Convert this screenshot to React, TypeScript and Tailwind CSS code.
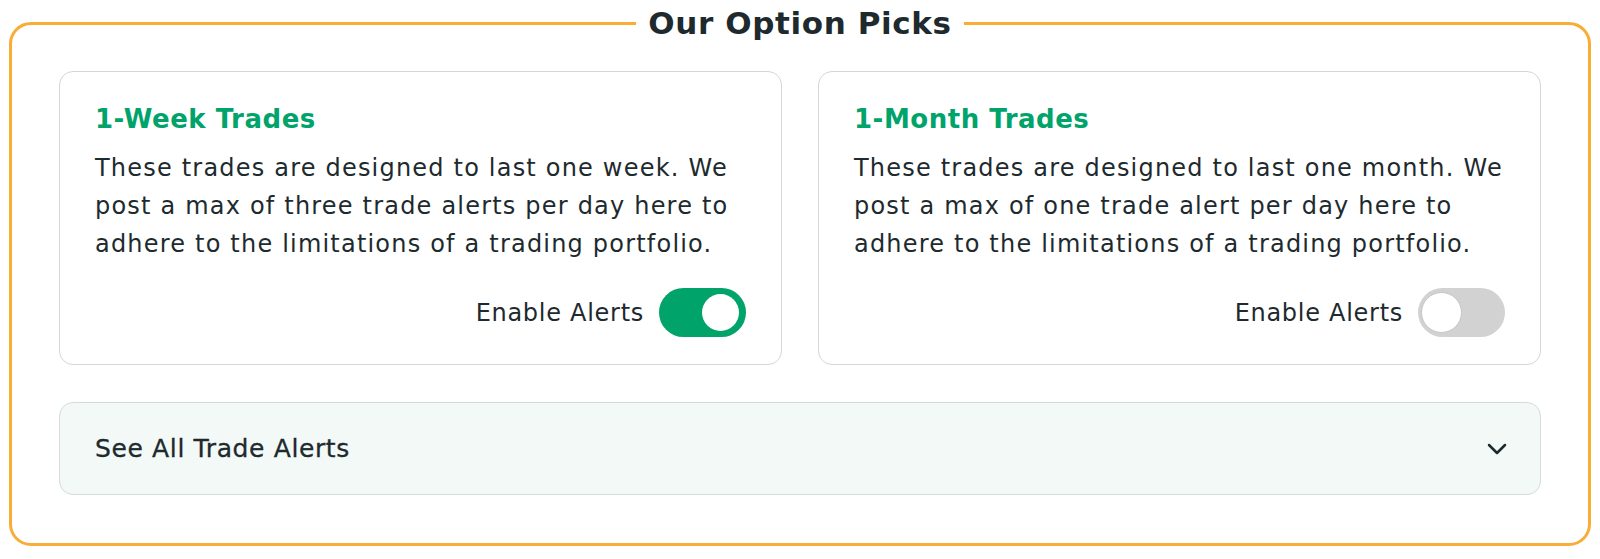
import React from "react";

function Toggle({ on }: { on: boolean }) {
  return on ? (
    <div className="w-[87px] h-[49px] rounded-full bg-[#00a36a] flex items-center justify-end px-[7px] shrink-0">
      <div className="w-[37px] h-[37px] rounded-full bg-white" />
    </div>
  ) : (
    <div className="w-[87px] h-[49px] rounded-full bg-[#d2d2d2] flex items-center justify-start px-[3px] shrink-0">
      <div className="w-[41px] h-[41px] rounded-full bg-white border-[1.5px] border-[#c4c4c4]" />
    </div>
  );
}

function Card({ title, text, on }: { title: string; text: string; on: boolean }) {
  return (
    <div className="flex-1 h-[294px] shrink-0 rounded-[14px] border border-[#d6d6d6] bg-white flex flex-col pl-[35px] pr-[35px] pt-[27px] pb-[27px]">
      <h3 className="text-[26px] leading-[40px] font-bold text-[#00a36a] tracking-[0.02em]">{title}</h3>
      <p className="mt-[10px] text-[24px] leading-[38px] text-[#1d2a2e] tracking-[0.05em]">{text}</p>
      <div className="mt-auto flex items-center justify-end gap-[15px]">
        <span className="text-[24px] text-[#1d2a2e] tracking-[0.03em]">Enable Alerts</span>
        <Toggle on={on} />
      </div>
    </div>
  );
}

export default function App() {
  return (
    <div className="w-[1600px] h-[559px] bg-white" style={{ fontFamily: "'DejaVu Sans', sans-serif" }}>
      <fieldset className="mx-[9px] border-[3px] border-[#f9ad36] rounded-[22px] px-[47px] pb-[48px]">
        <legend className="mx-auto px-[12px] text-[31px] leading-[46px] font-bold text-[#1e2a2e] tracking-[0.02em]">
          Our Option Picks
        </legend>
        <div className="pt-[25px] flex flex-col gap-[37px]">
          <div className="flex gap-[36px] shrink-0">
            <Card
              title="1-Week Trades"
              text="These trades are designed to last one week. We post a max of three trade alerts per day here to adhere to the limitations of a trading portfolio."
              on={true}
            />
            <Card
              title="1-Month Trades"
              text="These trades are designed to last one month. We post a max of one trade alert per day here to adhere to the limitations of a trading portfolio."
              on={false}
            />
          </div>
          <div className="h-[93px] shrink-0 rounded-[14px] border border-[#d4dbd9] bg-[#f3f9f7] flex items-center justify-between pl-[35px] pr-[33px]">
            <span className="text-[25px] text-[#1d2a2e] tracking-[0.025em] [-webkit-text-stroke:0.3px_#1d2a2e]">See All Trade Alerts</span>
            <svg width="20" height="12" viewBox="0 0 20 12" fill="none" stroke="#1d2a2e" strokeWidth="2.5" strokeLinecap="round" strokeLinejoin="round">
              <path d="M2 2 L10 10 L18 2" />
            </svg>
          </div>
        </div>
      </fieldset>
    </div>
  );
}
